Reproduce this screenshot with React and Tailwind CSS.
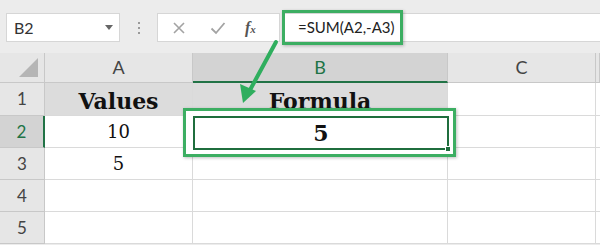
import React from 'react';

const grid = 'border-r border-b border-[#dadada]';
const head = 'border-r border-b border-[#c8c8c8] bg-[#e6e6e6] text-[#444]';
const sans = { fontFamily: 'Lato, "Open Sans", sans-serif' };
const serif = { fontFamily: '"DejaVu Serif", "Liberation Serif", serif' };

const Row = ({ n, a, b, selected, shaded, bold }) => (
    <>
        <div
            className={`flex items-center justify-center text-[17px] ${selected ? 'border-r-2 border-r-[#217346] border-b border-[#c8c8c8] bg-[#d3d3d3] text-[#217346]' : `${head} ${shaded ? 'bg-[#dedede]' : ''}`}`}
            style={sans}
        >
            {n}
        </div>
        <div
            className={`flex items-center justify-center ${grid} ${shaded ? 'bg-[#dcdcdc] pt-[5px]' : 'bg-white'} ${bold ? 'font-bold text-[22px]' : 'text-[18px]'} text-[#111]`}
            style={serif}
        >
            {a}
        </div>
        <div
            className={`flex items-center justify-center ${grid} ${shaded ? 'bg-[#dcdcdc] pt-[5px]' : 'bg-white'} ${bold ? 'font-bold text-[22px]' : 'text-[18px]'} text-[#111]`}
            style={serif}
        >
            {b}
        </div>
        <div className={`${grid} bg-white`} />
        <div className="border-b border-[#dadada] bg-white" />
    </>
);

export default function App() {
    return (
        <div className="relative w-[600px] h-[245px] overflow-hidden bg-[#ececec]" style={sans}>
            {/* formula bar */}
            <div className="h-[53px] pt-[13px] flex items-start">
                <div className="ml-[6px] w-[114px] h-[29px] bg-white border border-[#d6d6d6] flex items-center justify-between pl-[7px] pr-[6px]">
                    <span className="text-[16px] text-[#333]">B2</span>
                    <span className="w-0 h-0 border-l-[4px] border-r-[4px] border-t-[5px] border-l-transparent border-r-transparent border-t-[#666]" />
                </div>
                <div className="w-[37px] h-[29px] flex flex-col items-center justify-center gap-[3px]">
                    <span className="w-[2px] h-[2px] bg-[#9a9a9a]" />
                    <span className="w-[2px] h-[2px] bg-[#9a9a9a]" />
                    <span className="w-[2px] h-[2px] bg-[#9a9a9a]" />
                </div>
                <div className="w-[123px] h-[29px] bg-white border border-[#d6d6d6] flex items-center">
                    <svg className="ml-[14px]" width="14" height="14" viewBox="0 0 14 14">
                        <path d="M2 2 L12 12 M12 2 L2 12" stroke="#a3a3a3" strokeWidth="1.6" fill="none" />
                    </svg>
                    <svg className="ml-[24px]" width="16" height="14" viewBox="0 0 16 14">
                        <path d="M1.5 7.5 L6 12 L14.5 2" stroke="#a3a3a3" strokeWidth="1.8" fill="none" />
                    </svg>
                    <span className="ml-[19px] text-[16px] italic font-bold text-[#555]" style={{ fontFamily: '"Liberation Serif", serif' }}>
                        f<span className="text-[11px]">x</span>
                    </span>
                </div>
                <div className="ml-[3px] flex-1 h-[29px] bg-white border-y border-[#d6d6d6] flex items-center pl-[15px]">
                    <span className="text-[15px] text-[#222]">=SUM(A2,-A3)</span>
                </div>
            </div>

            {/* sheet */}
            <div className="grid grid-cols-[45px_148px_255px_148px_1fr] grid-rows-[30px_33px_32px_32px_32px_32px]">
                <div className={`${head} flex items-end justify-end pr-[6px] pb-[5px]`}>
                    <span className="w-0 h-0 border-l-[19px] border-b-[19px] border-l-transparent border-b-[#b5b5b5]" />
                </div>
                <div className={`${head} flex items-center justify-center text-[18px]`}>A</div>
                <div className="flex items-center justify-center text-[18px] bg-[#d3d3d3] border-r border-[#c8c8c8] border-b-2 border-b-[#217346] text-[#217346]">B</div>
                <div className={`${head} flex items-center justify-center text-[18px]`}>C</div>
                <div className={head} />

                <Row n="1" a="Values" b="Formula" shaded bold />
                <Row n="2" a="10" b="" selected />
                <Row n="3" a="5" b="" />
                <Row n="4" a="" b="" />
                <Row n="5" a="" b="" />
            </div>

            {/* callout around formula */}
            <div className="absolute left-[282px] top-[10px] w-[121px] h-[35px] border-[3px] border-[#3cae62] shadow-[1px_1px_3px_rgba(0,0,0,0.25)]" />

            {/* selected cell callout */}
            <div className="absolute left-[183px] top-[108px] w-[273px] h-[49px] bg-white border-[3px] border-[#3cae62] shadow-[1px_1px_3px_rgba(0,0,0,0.25)] pt-[5px] pl-[7px]">
                <div className="relative w-[256px] h-[34px] border-2 border-[#1f6e3d] flex items-center justify-center">
                    <span className="text-[22px] font-bold text-[#111]" style={serif}>5</span>
                    <span className="absolute -right-[4px] -bottom-[4px] w-[6px] h-[6px] bg-[#1f6e3d] border border-white" />
                </div>
            </div>

            {/* arrow */}
            <svg className="absolute left-0 top-0" width="600" height="245" viewBox="0 0 600 245">
                <line x1="276" y1="42" x2="250" y2="90" stroke="#2fae5e" strokeWidth="4" strokeLinecap="round" />
                <polygon points="243,103 240,84 256,91" fill="#2fae5e" />
            </svg>
        </div>
    );
}
